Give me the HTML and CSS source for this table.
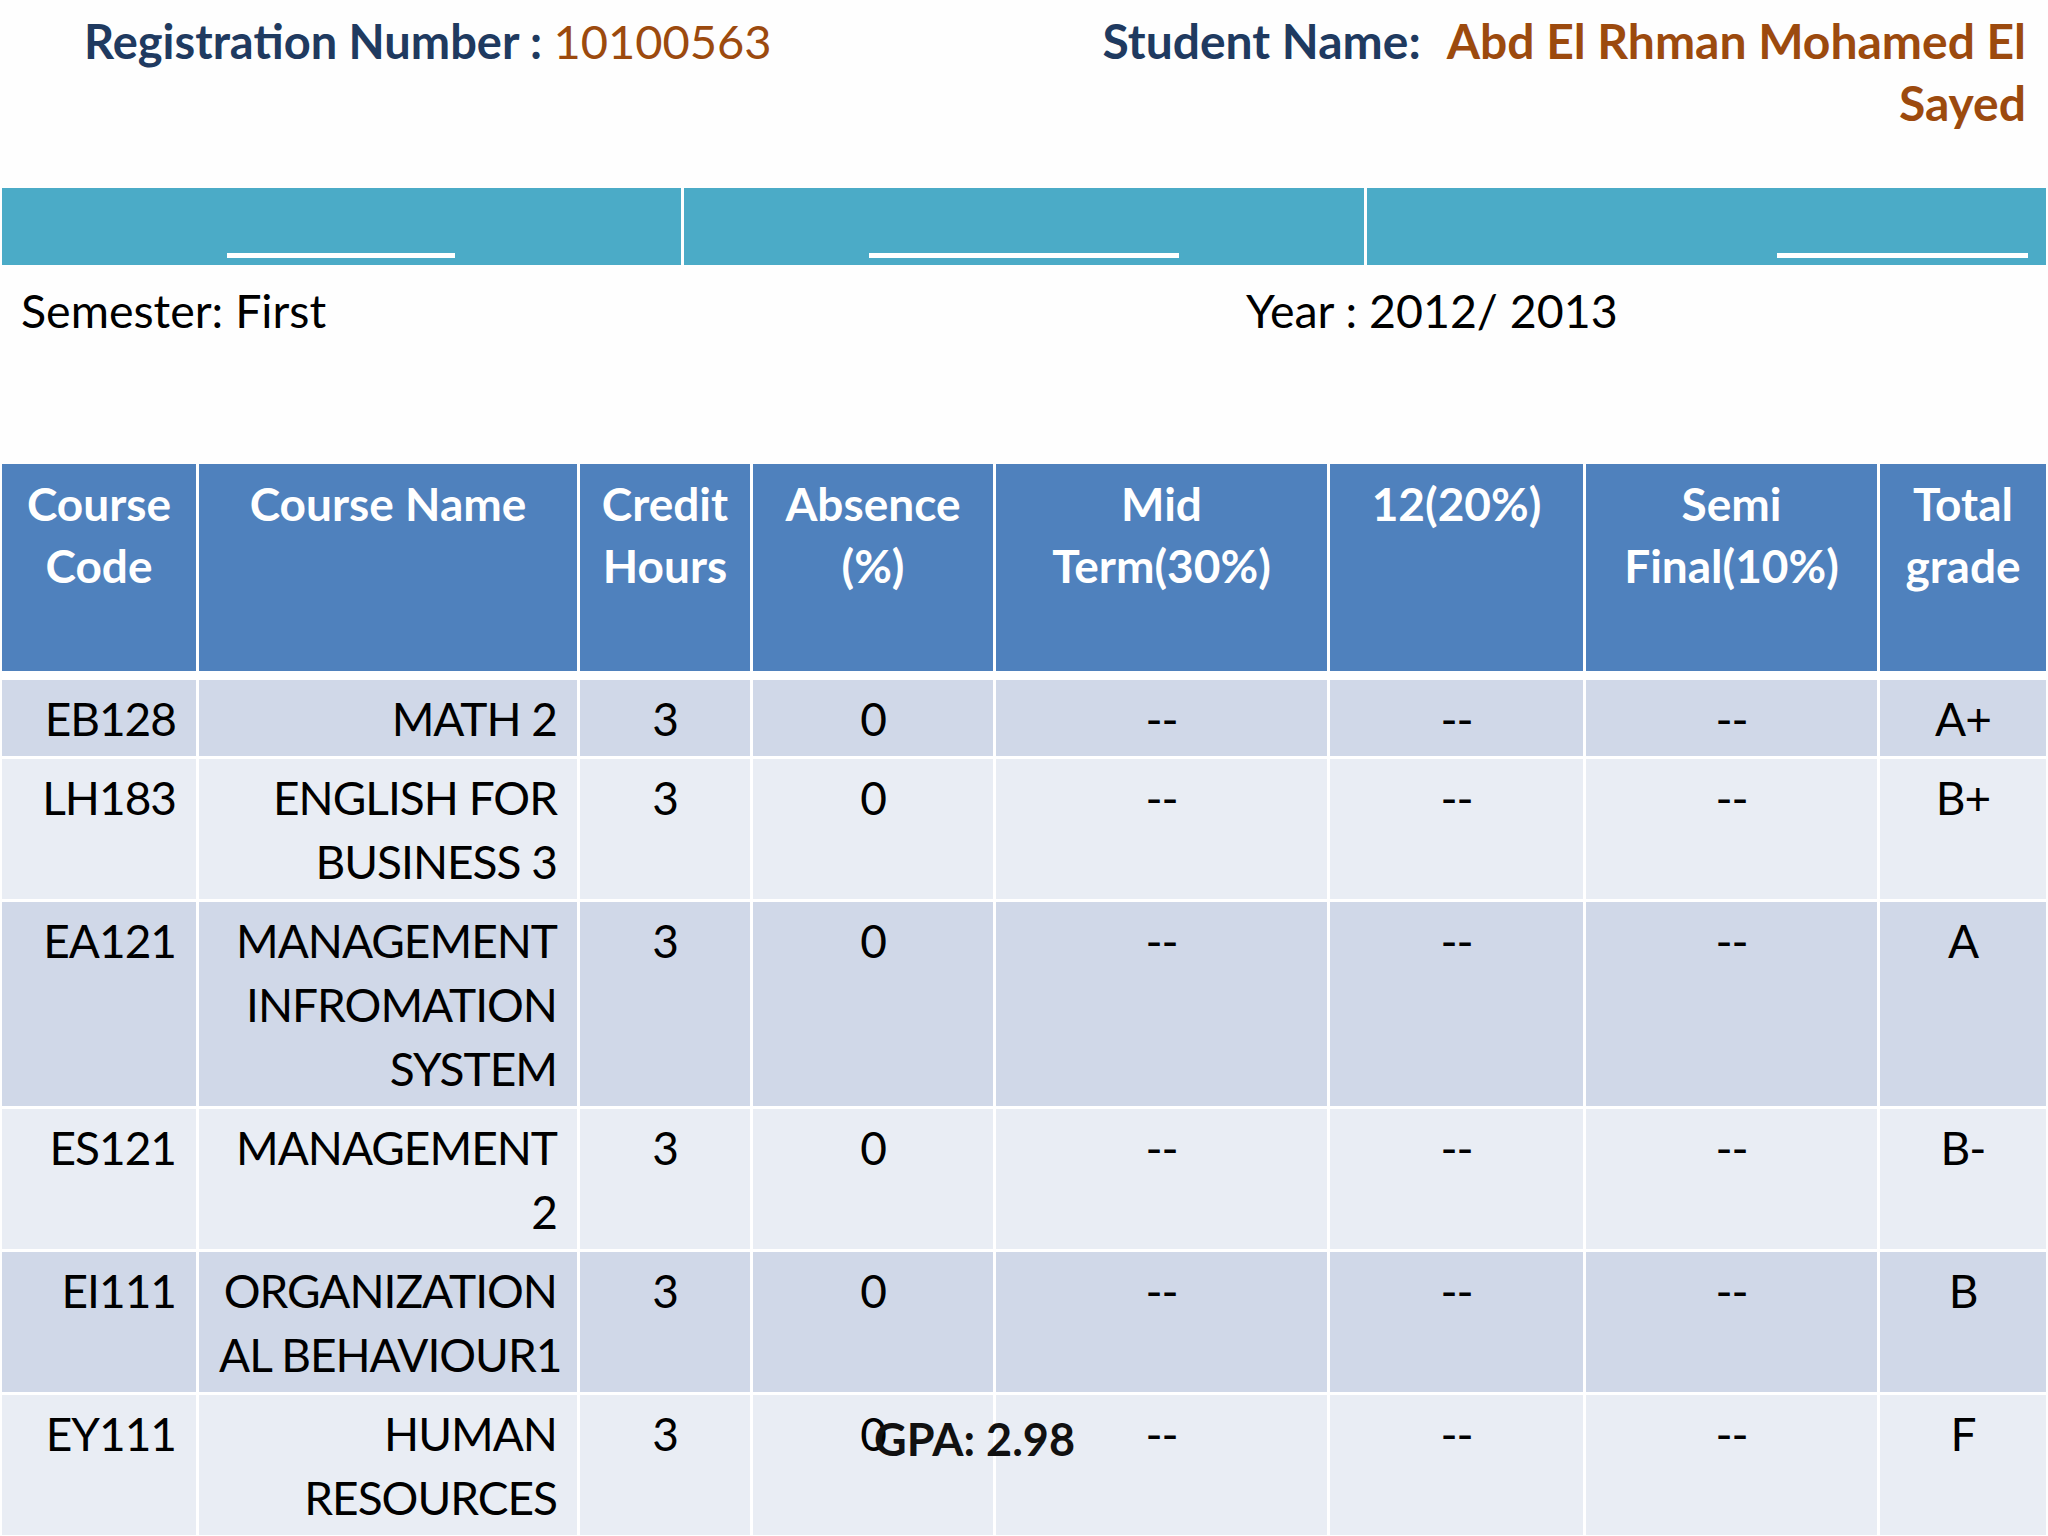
FILE: index.html
```html
<!DOCTYPE html>
<html lang="en">
<head>
<meta charset="utf-8">
<title>Student Result</title>
<link rel="stylesheet" href="styles.css">
</head>
<body>
<div class="slide">
  <header class="top">
    <div class="reg"><span class="label">Registration Number :</span> <span class="num">10100563</span></div>
    <div class="student"><span class="label">Student Name:</span><span class="name">Abd El Rhman Mohamed El<br>Sayed</span></div>
  </header>

  <div class="band">
    <div class="seg"><span class="blank b1"></span></div>
    <div class="seg"><span class="blank b2"></span></div>
    <div class="seg"><span class="blank b3"></span></div>
  </div>

  <div class="term">
    <div class="semester">Semester: First</div>
    <div class="year">Year : 2012/ 2013</div>
  </div>

  <div class="table-wrap">
    <table class="grades">
      <colgroup>
        <col class="c1"><col class="c2"><col class="c3"><col class="c4">
        <col class="c5"><col class="c6"><col class="c7"><col class="c8">
      </colgroup>
      <thead>
        <tr>
          <th>Course<br>Code</th>
          <th>Course Name</th>
          <th>Credit<br>Hours</th>
          <th>Absence<br>(%)</th>
          <th>Mid<br>Term(30%)</th>
          <th>12(20%)</th>
          <th>Semi<br>Final(10%)</th>
          <th>Total<br>grade</th>
        </tr>
      </thead>
      <tbody>
        <tr class="odd">
          <td class="r">EB128</td><td class="r">MATH 2</td><td>3</td><td>0</td><td>--</td><td>--</td><td>--</td><td>A+</td>
        </tr>
        <tr class="even">
          <td class="r">LH183</td><td class="r">ENGLISH FOR<br>BUSINESS 3</td><td>3</td><td>0</td><td>--</td><td>--</td><td>--</td><td>B+</td>
        </tr>
        <tr class="odd">
          <td class="r">EA121</td><td class="r">MANAGEMENT<br>INFROMATION<br>SYSTEM</td><td>3</td><td>0</td><td>--</td><td>--</td><td>--</td><td>A</td>
        </tr>
        <tr class="even">
          <td class="r">ES121</td><td class="r">MANAGEMENT<br>2</td><td>3</td><td>0</td><td>--</td><td>--</td><td>--</td><td>B-</td>
        </tr>
        <tr class="odd">
          <td class="r">EI111</td><td class="r">ORGANIZATION<br>AL BEHAVIOUR1</td><td>3</td><td>0</td><td>--</td><td>--</td><td>--</td><td>B</td>
        </tr>
        <tr class="even">
          <td class="r">EY111</td><td class="r">HUMAN<br>RESOURCES</td><td>3</td><td>0</td><td>--</td><td>--</td><td>--</td><td>F</td>
        </tr>
      </tbody>
    </table>
    <div class="gpa">GPA: 2.98</div>
  </div>
</div>
</body>
</html>
```

FILE: styles.css
```css
html, body {
  margin: 0;
  padding: 0;
  background: #ffffff;
}

body {
  font-family: Lato, "Liberation Sans", sans-serif;
  color: #000;
  overflow: hidden;
}

.slide {
  width: 2048px;
  height: 1536px;
  overflow: hidden;
  background: #fefefe;
}

.top {
  display: flex;
  justify-content: space-between;
  align-items: flex-start;
  padding: 10px 22px 0 84px;
  height: 180px;
  box-sizing: border-box;
  font-size: 48px;
  line-height: 62px;
  font-weight: 700;
}

.reg {
  font-size: 47px;
}

.label {
  color: #1f3a60;
}

.num {
  color: #9c4a0e;
  font-weight: 400;
}

.name {
  color: #9c4a0e;
  margin-left: 26px;
}

.student {
  text-align: right;
  display: flex;
  align-items: flex-start;
}

.band {
  display: flex;
  gap: 3px;
  margin: 8px 2px 0 2px;
  height: 77px;
}

.seg {
  flex: 1;
  background: #4babc7;
  display: flex;
  align-items: flex-end;
  padding-bottom: 7px;
  box-sizing: border-box;
}

.blank {
  display: block;
  height: 5px;
  background: #ffffff;
}

.b1 { margin-left: 225px; width: 228px; }
.b2 { margin-left: 185px; width: 310px; }
.b3 { margin-left: 410px; width: 251px; }

.term {
  display: flex;
  padding: 19px 0 0 21px;
  height: 199px;
  box-sizing: border-box;
  font-size: 46.5px;
  line-height: 52px;
  color: #000;
}

.semester {
  width: 1225px;
}

.table-wrap {
  position: relative;
  padding-left: 2px;
}

.grades {
  border-collapse: separate;
  border-spacing: 0;
  table-layout: fixed;
  width: 2044px;
  font-size: 46px;
  line-height: 64px;
}

.c1 { width: 197px; }
.c2 { width: 381px; }
.c3 { width: 173px; }
.c4 { width: 243px; }
.c5 { width: 334px; }
.c6 { width: 256px; }
.c7 { width: 294px; }
.c8 { width: 166px; }

.grades th,
.grades td {
  box-sizing: border-box;
  border-right: 3px solid #ffffff;
  border-bottom: 3px solid #ffffff;
  vertical-align: top;
  text-align: center;
  padding: 7px 20px 5px 20px;
  white-space: nowrap;
}

.grades td {
  letter-spacing: -1px;
}

.grades th:last-child,
.grades td:last-child {
  border-right: none;
}

.grades th {
  background: #4f81bd;
  color: #ffffff;
  font-weight: 700;
  line-height: 62px;
  height: 216px;
  padding-top: 9px;
  padding-left: 4px;
  padding-right: 4px;
  border-bottom: 9px solid #ffffff;
}

.grades td.r {
  text-align: right;
}

.odd td {
  background: #d0d8e8;
}

.even td {
  background: #e9edf4;
}

.gpa {
  position: absolute;
  left: 874px;
  top: 949px;
  font-size: 45px;
  line-height: 52px;
  font-weight: 700;
  color: #111111;
}
```
